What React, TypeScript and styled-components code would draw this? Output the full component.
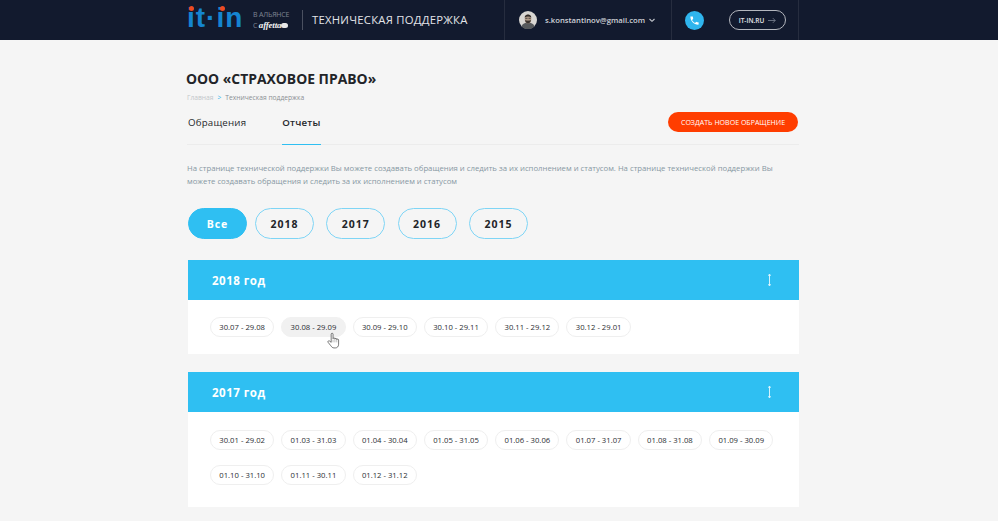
import React from "react";
import styled, { createGlobalStyle } from "styled-components";

const GlobalStyle = createGlobalStyle`
  html, body {
    margin: 0;
    padding: 0;
    background: #f5f5f5;
    font-family: "Open Sans", "Liberation Sans", sans-serif;
    overflow: hidden;
  }
  * { box-sizing: border-box; }
`;

const years = ["2018", "2017", "2016", "2015"];

const reports = [
  {
    year: "2018 год",
    periods: ["30.07 - 29.08", "30.08 - 29.09", "30.09 - 29.10", "30.10 - 29.11", "30.11 - 29.12", "30.12 - 29.01"],
  },
  {
    year: "2017 год",
    periods: [
      "30.01 - 29.02", "01.03 - 31.03", "01.04 - 30.04", "01.05 - 31.05", "01.06 - 30.06", "01.07 - 31.07",
      "01.08 - 31.08", "01.09 - 30.09", "01.10 - 31.10", "01.11 - 30.11", "01.12 - 31.12",
    ],
  },
];

const App = () => (
  <Page>
    <GlobalStyle />
    <Header>
      <HeaderInner>
        <Logo>
          it<LogoDot>·</LogoDot>in
          <RedDot $left={1.5} />
          <RedDot $left={32.5} />
        </Logo>
        <Alliance>
          <span>В АЛЬЯНСЕ</span>
          <span>
            С <AllianceName>affetta</AllianceName>
            <AllianceBadge />
          </span>
        </Alliance>
        <HeaderTitle>ТЕХНИЧЕСКАЯ ПОДДЕРЖКА</HeaderTitle>
        <UserCell>
          <Avatar viewBox="0 0 18 18">
            <circle cx="9" cy="9" r="9" fill="#d8d6d2" />
            <path d="M2.5 15.5c1-3 3.500-4 6.500-4s5.500 1 6.500 4A9 9 0 0 1 2.500 15.500z" fill="#55585b" />
            <ellipse cx="9" cy="8" rx="3.300" ry="4.600" fill="#b09a88" />
            <path d="M5.600 6.500C6 2.500 12 2.500 12.400 6.500 10.500 5.200 7.500 5.200 5.600 6.500z" fill="#2f2a27" />
            <path d="M5.900 8.800c1 5 5.200 5 6.200 0-1 1.200-5.200 1.200-6.200 0z" fill="#3a332f" />
            <path d="M6.300 7.300h2.200M9.500 7.300h2.200" stroke="#222" strokeWidth="0.700" />
          </Avatar>
          <UserMail>s.konstantinov@gmail.com</UserMail>
          <Chevron viewBox="0 0 8 8">
            <path d="M1.500 3l2.500 2.300L6.500 3" fill="none" stroke="#c5c8cf" strokeWidth="1.100" />
          </Chevron>
        </UserCell>
        <PhoneCell>
          <PhoneBadge>
            <svg viewBox="0 0 24 24" width="11" height="11">
              <path
                fill="#fff"
                d="M6.600 10.800c1.400 2.800 3.800 5.100 6.600 6.600l2.200-2.200c.3-.3.700-.4 1-.2 1.100.4 2.300.6 3.600.6.600 0 1 .4 1 1V20c0 .6-.4 1-1 1C10.600 21 3 13.400 3 4c0-.6.400-1 1-1h3.500c.6 0 1 .4 1 1 0 1.300.2 2.500.6 3.600.1.300 0 .7-.2 1l-2.300 2.200z"
              />
            </svg>
          </PhoneBadge>
        </PhoneCell>
        <SiteCell>
          <SiteButton>
            IT-IN.RU
            <svg viewBox="0 0 10 8" width="8" height="7">
              <path d="M0 4h9M6 1l3 3-3 3" fill="none" stroke="#7e8594" strokeWidth="1" />
            </svg>
          </SiteButton>
        </SiteCell>
      </HeaderInner>
    </Header>
    <Content>
      <Title>ООО «СТРАХОВОЕ ПРАВО»</Title>
      <Breadcrumbs>
        <span>Главная</span>
        <BreadcrumbArrow>&gt;</BreadcrumbArrow>
        <BreadcrumbCurrent>Техническая поддержка</BreadcrumbCurrent>
      </Breadcrumbs>
      <TabsRow>
        <Tab>Обращения</Tab>
        <Tab $active>Отчеты</Tab>
        <CreateButton>СОЗДАТЬ НОВОЕ ОБРАЩЕНИЕ</CreateButton>
      </TabsRow>
      <Description>
        На странице технической поддержки Вы можете создавать обращения и следить за их исполнением и статусом. На
        странице технической поддержки Вы можете создавать обращения и следить за их исполнением и статусом
      </Description>
      <YearFilter>
        <YearPill $active>Все</YearPill>
        {years.map((year) => (
          <YearPill key={year}>{year}</YearPill>
        ))}
      </YearFilter>
      {reports.map((report) => (
        <Section key={report.year}>
          <SectionHead>
            {report.year}
            <svg viewBox="0 0 7 12" width="7" height="12">
              <path d="M3.500 0v12M2 1.200h3M2 10.800h3" fill="none" stroke="#e6f7fe" strokeWidth="0.900" />
            </svg>
          </SectionHead>
          <SectionBody $wrapped={report.periods.length > 8}>
            {report.periods.map((period) => (
              <PeriodChip key={period} $hover={period === "30.08 - 29.09"}>
                {period}
                {period === "30.08 - 29.09" && (
                  <HandCursor viewBox="0 0 14 18">
                    <path
                      d="M4.500 11V2.200c0-1.400 2-1.400 2 0V7c0-1.200 2-1.200 2 0v.6c0-1.200 2-1.200 2 0v.6c0-1 2-1 2 .2V13c0 2.500-1.500 4-3.500 4H7.500c-1.500 0-2.500-1-3.500-2.500L1.200 11c-.8-1.300.8-2.300 1.800-1.300z"
                      fill="#fff"
                      stroke="#333"
                      strokeWidth="0.700"
                    />
                    <path d="M6.500 8v3M8.500 8v3M10.500 8.500V11" fill="none" stroke="#777" strokeWidth="0.500" />
                  </HandCursor>
                )}
              </PeriodChip>
            ))}
          </SectionBody>
        </Section>
      ))}
    </Content>
  </Page>
);

const Page = styled.div`
  width: 998px;
  height: 521px;
  overflow: hidden;
  background: #f5f5f5;
`;

const Header = styled.header`
  height: 40px;
  background: #121a2e;
  display: flex;
  justify-content: center;
`;

const HeaderInner = styled.div`
  width: 998px;
  padding-left: 187px;
  display: flex;
  align-items: center;
`;

const Logo = styled.div`
  position: relative;
  width: 58px;
  margin-top: -5px;
  font-family: "Liberation Sans", sans-serif;
  font-size: 28px;
  font-weight: 700;
  line-height: 30px;
  letter-spacing: 1px;
  color: #1585d0;
  white-space: nowrap;
`;

const LogoDot = styled.span`
  margin: 0;
`;

const RedDot = styled.i<{ $left: number }>`
  position: absolute;
  top: 3px;
  left: ${({ $left }) => $left}px;
  width: 5px;
  height: 5px;
  border-radius: 50%;
  background: #ee4a22;
`;

const Alliance = styled.div`
  margin-left: 8px;
  width: 39px;
  display: flex;
  flex-direction: column;
  font-size: 7px;
  line-height: 10px;
  letter-spacing: -0.2px;
  color: #7f8592;
  white-space: nowrap;
`;

const AllianceName = styled.b`
  font-family: "Liberation Serif", serif;
  font-style: italic;
  font-size: 9px;
  color: #f2f2f2;
`;

const AllianceBadge = styled.i`
  display: inline-block;
  width: 7px;
  height: 5px;
  border-radius: 3px;
  background: #e8e8e8;
`;

const HeaderTitle = styled.div`
  margin-left: 10px;
  padding-left: 9px;
  height: 20px;
  width: 202px;
  border-left: 1px solid #4a5060;
  font-size: 11.3px;
  line-height: 20px;
  letter-spacing: 0.25px;
  color: #e3e5e9;
  white-space: nowrap;
`;

const UserCell = styled.div`
  height: 40px;
  width: 167px;
  padding-left: 14px;
  display: flex;
  align-items: center;
  border-left: 1px solid #262d3f;
`;

const Avatar = styled.svg`
  width: 18px;
  height: 18px;
  flex: none;
`;

const UserMail = styled.span`
  margin-left: 8px;
  font-size: 7.700px;
  font-weight: 600;
  color: #cfd2d8;
  white-space: nowrap;
`;

const Chevron = styled.svg`
  margin-left: 3px;
  width: 8px;
  height: 8px;
  flex: none;
`;

const PhoneCell = styled.div`
  height: 40px;
  width: 58px;
  padding-left: 13px;
  display: flex;
  align-items: center;
  border-left: 1px solid #262d3f;
`;

const PhoneBadge = styled.div`
  width: 19px;
  height: 19px;
  border-radius: 50%;
  background: #2fb5ee;
  display: flex;
  align-items: center;
  justify-content: center;
`;

const SiteCell = styled.div`
  height: 40px;
  width: 70px;
  display: flex;
  align-items: center;
  border-right: 1px solid #262d3f;
`;

const SiteButton = styled.div`
  width: 57px;
  height: 20px;
  border: 1px solid #b4b7be;
  border-radius: 10px;
  display: flex;
  align-items: center;
  justify-content: center;
  gap: 4px;
  font-size: 6.500px;
  font-weight: 600;
  color: #e6e7ea;
`;

const Content = styled.main`
  width: 612px;
  margin-left: 187px;
  display: flex;
  flex-direction: column;
`;

const Title = styled.h1`
  margin: 29px 0 0 -1px;
  font-size: 13.900px;
  font-weight: 700;
  line-height: 20px;
  color: #222428;
`;

const Breadcrumbs = styled.div`
  margin-top: 3px;
  height: 10px;
  display: flex;
  align-items: center;
  gap: 4px;
  font-size: 6.700px;
  color: #c2c6ca;
`;

const BreadcrumbArrow = styled.span`
  color: #2fb5ee;
`;

const BreadcrumbCurrent = styled.span`
  color: #8b8f94;
`;

const TabsRow = styled.div`
  margin-top: 8px;
  height: 35px;
  padding-left: 1px;
  display: flex;
  align-items: flex-start;
  gap: 36px;
  border-bottom: 1px solid #ececec;
`;

const Tab = styled.div<{ $active?: boolean }>`
  height: 35px;
  padding-top: 6px;
  font-size: 9.700px;
  font-weight: ${({ $active }) => ($active ? 600 : 400)};
  line-height: 14px;
  letter-spacing: 0.2px;
  color: #25282c;
  border-bottom: 1px solid ${({ $active }) => ($active ? "#2fbff2" : "transparent")};
`;

const CreateButton = styled.button`
  margin: 2px 1px 0 auto;
  width: 130px;
  height: 20px;
  padding: 0;
  border: 0;
  border-radius: 10px;
  background: #ff3d00;
  font-family: inherit;
  font-size: 7.050px;
  font-weight: 500;
  color: #fff;
`;

const Description = styled.p`
  margin: 17px 0 0;
  width: 600px;
  font-size: 7.750px;
  line-height: 13px;
  color: #8798a3;
`;

const YearFilter = styled.div`
  margin: 20px 0 0 1px;
  display: flex;
  gap: 12.300px;
`;

const YearPill = styled.div<{ $active?: boolean }>`
  width: 59px;
  height: 31px;
  margin-right: ${({ $active }) => ($active ? "-4.300px" : "0")};
  border-radius: 16px;
  border: 1px solid ${({ $active }) => ($active ? "#2fbff2" : "#7fd5f5")};
  background: ${({ $active }) => ($active ? "#2fbff2" : "transparent")};
  display: flex;
  align-items: center;
  justify-content: center;
  font-size: 10.500px;
  font-weight: 700;
  letter-spacing: 1px;
  color: ${({ $active }) => ($active ? "#fff" : "#222428")};
`;

const Section = styled.section`
  margin: 21px 0 0 1px;
  background: #fff;
  & + & {
    margin-top: 18px;
  }
`;

const SectionHead = styled.div`
  height: 40px;
  padding: 0 26px 0 24px;
  display: flex;
  align-items: center;
  justify-content: space-between;
  background: #2fbff2;
  font-size: 11.500px;
  font-weight: 700;
  letter-spacing: 0.5px;
  color: #fff;
`;

const SectionBody = styled.div<{ $wrapped?: boolean }>`
  padding: ${({ $wrapped }) => ($wrapped ? "18px 10px 22px 22px" : "17px 10px 17px 22px")};
  display: flex;
  flex-wrap: wrap;
  gap: 15px 7px;
`;

const PeriodChip = styled.div<{ $hover?: boolean }>`
  position: relative;
  width: 64.300px;
  height: 20px;
  border-radius: 10px;
  border: 1px solid ${({ $hover }) => ($hover ? "#f1f1f1" : "#efefef")};
  background: ${({ $hover }) => ($hover ? "#f1f1f1" : "#fff")};
  display: flex;
  align-items: center;
  justify-content: center;
  font-size: 7.700px;
  color: #2b2e33;
  white-space: nowrap;
`;

const HandCursor = styled.svg`
  position: absolute;
  left: 45px;
  top: 14px;
  width: 13px;
  height: 17px;
`;

export default App;
